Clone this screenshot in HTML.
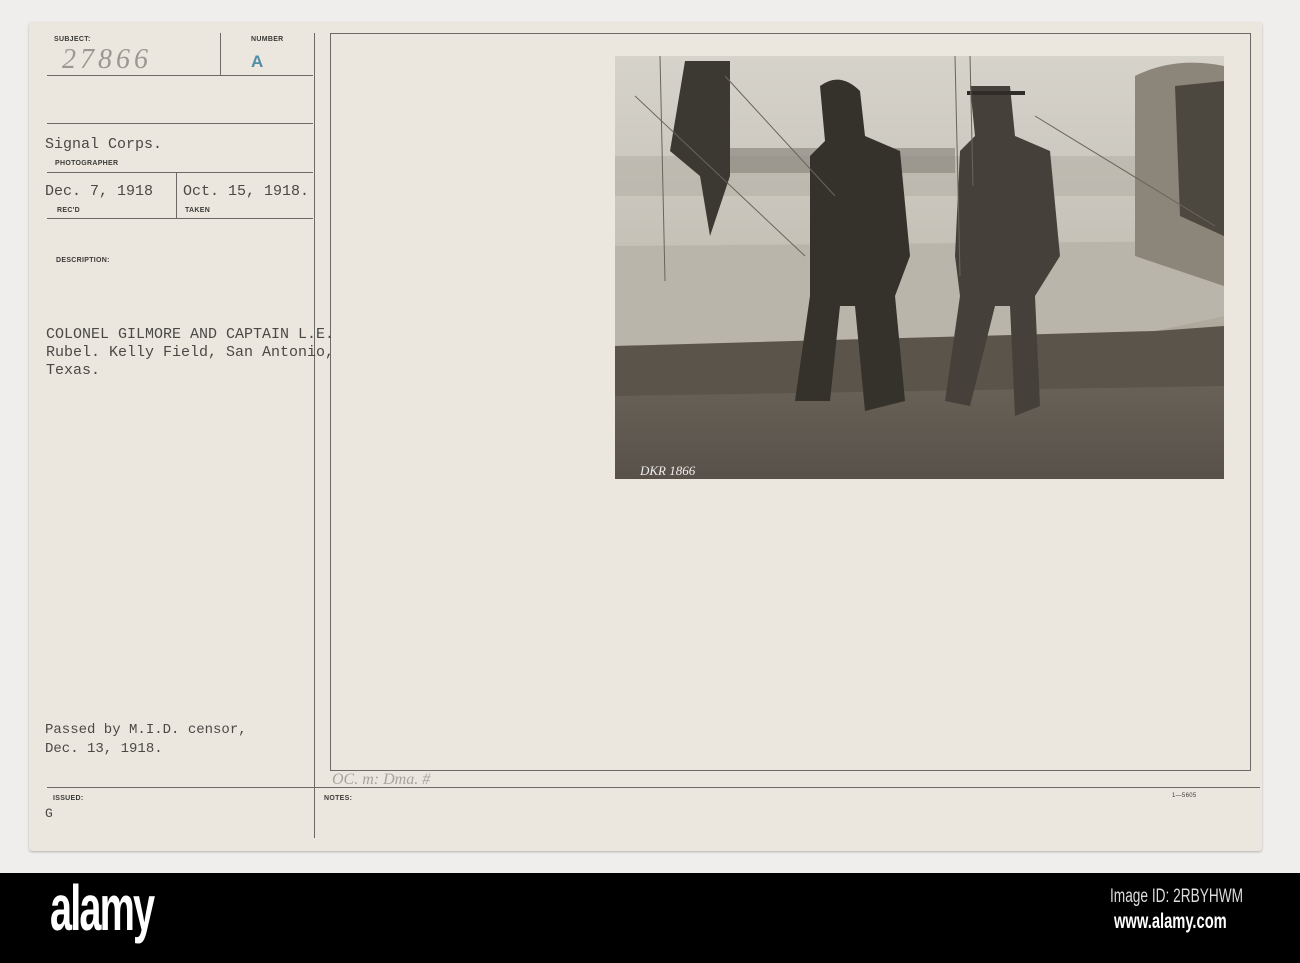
<!DOCTYPE html>
<html><head><meta charset="utf-8"><style>
body{margin:0;width:1300px;height:963px;background:#efeeec;position:relative;overflow:hidden;font-family:"Liberation Mono",monospace;}
.card{position:absolute;left:29px;top:22px;width:1233px;height:829px;background:#ebe7de;border-radius:3px;box-shadow:0 1px 2px rgba(0,0,0,.25);}
.a{position:absolute;}
.h{position:absolute;height:1px;background:#6b6a66;}
.v{position:absolute;width:1px;background:#6b6a66;}
.lbl{position:absolute;font-family:"Liberation Sans",sans-serif;font-weight:bold;font-size:7px;color:#3b3a38;letter-spacing:.3px;}
.t{position:absolute;font-size:15px;color:#4a4946;white-space:pre;line-height:18px;}
.foot{position:absolute;left:0;top:873px;width:1300px;height:90px;background:#000;}
</style></head><body>
<div class="card"></div>
<div class="h" style="left:47px;top:75px;width:266px"></div>
<div class="h" style="left:47px;top:123px;width:266px"></div>
<div class="h" style="left:47px;top:172px;width:266px"></div>
<div class="h" style="left:47px;top:218px;width:266px"></div>
<div class="v" style="left:220px;top:33px;height:42px"></div>
<div class="v" style="left:176px;top:172px;height:46px"></div>
<div class="v" style="left:314px;top:33px;height:805px"></div>
<div class="a" style="left:330px;top:33px;width:919px;height:736px;border:1px solid #6b6a66"></div>
<div class="h" style="left:47px;top:787px;width:1213px"></div>
<div class="lbl" style="left:54px;top:36px">SUBJECT:</div>
<div class="lbl" style="left:251px;top:36px">NUMBER</div>
<div class="a" style="left:62px;top:44px;font-family:'Liberation Serif',serif;font-style:italic;font-size:28px;color:#9a9892;letter-spacing:4px">27866</div>
<div class="a" style="left:251px;top:52px;font-family:'Liberation Sans',sans-serif;font-weight:bold;font-size:17px;color:#4f8ea6">A</div>
<div class="t" style="left:45px;top:136px">Signal Corps.</div>
<div class="lbl" style="left:55px;top:160px">PHOTOGRAPHER</div>
<div class="t" style="left:45px;top:183px">Dec. 7, 1918</div>
<div class="t" style="left:183px;top:183px">Oct. 15, 1918.</div>
<div class="lbl" style="left:57px;top:207px">REC'D</div>
<div class="lbl" style="left:185px;top:207px">TAKEN</div>
<div class="lbl" style="left:56px;top:257px">DESCRIPTION:</div>
<div class="t" style="left:46px;top:326px">COLONEL GILMORE AND CAPTAIN L.E.
Rubel. Kelly Field, San Antonio,
Texas.</div>
<div class="t" style="left:45px;top:721px;font-size:14px;line-height:19px">Passed by M.I.D. censor,
Dec. 13, 1918.</div>
<div class="lbl" style="left:53px;top:795px">ISSUED:</div>
<div class="a" style="left:45px;top:806px;font-size:13px;color:#4a4946">G</div>
<div class="lbl" style="left:324px;top:795px">NOTES:</div>
<div class="lbl" style="left:1172px;top:793px;font-weight:normal;font-size:6px">1—5605</div>
<div class="a" style="left:332px;top:771px;font-family:'Liberation Serif',serif;font-style:italic;font-size:16px;color:#a6a49e">OC. m: Dma. #</div>
<svg class="a" style="left:615px;top:56px" width="609" height="423" viewBox="0 0 609 423">
<defs><linearGradient id="g" x1="0" y1="0" x2="0" y2="1">
<stop offset="0" stop-color="#d6d3cb"/><stop offset=".5" stop-color="#c3bfb5"/><stop offset=".68" stop-color="#a8a296"/><stop offset=".75" stop-color="#6a6358"/><stop offset="1" stop-color="#58514a"/></linearGradient></defs>
<rect width="609" height="423" fill="url(#g)"/>
<rect x="0" y="100" width="609" height="40" fill="#aaa59a" opacity=".4"/>
<rect x="90" y="92" width="250" height="25" fill="#8f8a80" opacity=".7"/>
<path d="M0 190 L609 185 L609 260 L540 275 L0 290Z" fill="#bab5aa"/>
<path d="M0 290 L540 275 L609 270 L609 330 L0 340Z" fill="#5a544a"/>
<path d="M520 20 Q560 0 609 10 L609 230 L520 200Z" fill="#8b857a"/>
<path d="M560 30 L609 25 L609 180 L565 160Z" fill="#4c473f"/>
<path d="M70 5 L115 5 L115 120 L95 180 L85 120 L55 95Z" fill="#3c3832"/>
<path d="M205 30 Q225 15 245 35 L250 80 L285 95 L295 200 L280 240 L290 345 L250 355 L240 250 L225 250 L215 345 L180 345 L195 240 L195 100 L210 85Z" fill="#35312b"/>
<path d="M355 30 L395 30 L400 80 L435 95 L445 200 L420 240 L425 350 L400 360 L395 250 L380 250 L355 350 L330 345 L345 240 L340 200 L345 95 L360 80Z" fill="#45413a"/>
<rect x="352" y="35" width="58" height="4" fill="#2f2b26"/>
<g stroke="#6a655c" stroke-width="1" fill="none"><path d="M45 0 L50 225"/><path d="M340 0 L345 220"/><path d="M355 0 L358 130"/><path d="M20 40 L190 200"/><path d="M110 20 L220 140"/><path d="M420 60 L600 170"/></g>
<text x="25" y="419" font-family="Liberation Serif" font-style="italic" font-size="13" fill="#eee">DKR 1866</text>
</svg>
<div class="foot">
<div class="a" style="left:50px;top:-2px;font-family:'Liberation Sans',sans-serif;font-weight:bold;font-size:64px;color:#fff;transform:scaleX(.62);transform-origin:left;letter-spacing:-3px">alamy</div>
<div class="a" style="left:1110px;top:13px;font-family:'Liberation Sans',sans-serif;font-size:19px;color:#ddd;transform:scaleX(.72);transform-origin:left">Image ID: 2RBYHWM</div>
<div class="a" style="left:1114px;top:37px;font-family:'Liberation Sans',sans-serif;font-weight:bold;font-size:21px;color:#fff;transform:scaleX(.7);transform-origin:left">www.alamy.com</div>
</div>
</body></html>
